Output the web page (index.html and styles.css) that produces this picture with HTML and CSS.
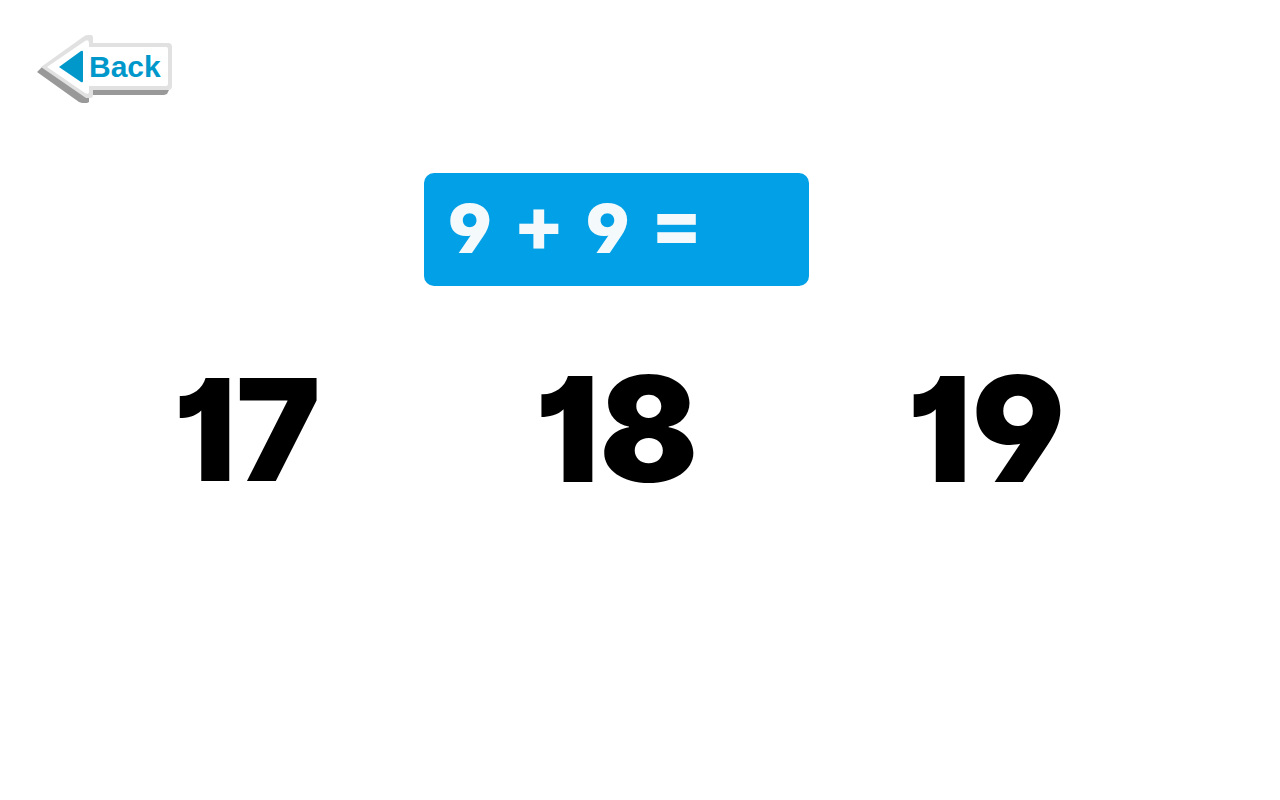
FILE: index.html
```html
<!DOCTYPE html>
<html lang="en">
<head>
  <meta charset="UTF-8">
  <title>9 + 9</title>
  <link rel="stylesheet" href="styles.css">
</head>
<body>
  <header class="top">
    <a class="back" href="#">
      <svg width="135" height="69" viewBox="0 0 135 69">
        <!-- shadow -->
        <path d="M0 37 L5 32 H56 V55 H132 L130 59 L127 60 H52 V67 L50 68 H45 L42 67 Z" fill="#999"/>
        <!-- arrow -->
        <path d="M4 32 L46 2 Q48 0 51 0 H54 Q56 0 56 3 V8 H131 Q135 8 135 12 V51 Q135 55 131 55 H56 V60 Q56 63 53 63 H49 Z" fill="#e1e1e1"/>
        <path d="M10 32 L48 6 Q52 4 52 8 V12 H129 Q131 12 131 14 V49 Q131 51 129 51 H52 V57 Q52 60 48 58 Z" fill="#fff"/>
        <path d="M22 32 L44 16 Q46 15 46 17 V46 Q46 48 44 47 Z" fill="#0098cb"/>
        <text class="back-text" x="52" y="42">Back</text>
      </svg>
    </a>
  </header>

  <main class="game">
    <div class="question">
      <span>9</span>
      <span class="sign">+</span>
      <span>9</span>
      <span class="sign">=</span>
    </div>

    <div class="answers">
      <button class="answer small">17</button>
      <button class="answer">18</button>
      <button class="answer">19</button>
    </div>
  </main>
</body>
</html>
```
FILE: styles.css
```css
body {
  margin: 0;
  background-color: #fff;
  font-family: Inter, sans-serif;
  color: #000;
}

.top {
  padding: 35px 37px 0;
}

.back {
  display: block;
  width: fit-content;
}

.back svg {
  display: block;
}

.back-text {
  font-family: "Liberation Sans", Arial, sans-serif;
  font-size: 30px;
  font-weight: bold;
  fill: #0098cb;
}

.game {
  padding: 69px 109px 0 62px;
}

.question {
  display: flex;
  align-items: center;
  gap: 21px;
  box-sizing: border-box;
  max-width: 385px;
  height: 113px;
  margin: 0 auto;
  padding: 0 24px 4px;
  background-color: #02a0e6;
  border-radius: 10px;
  color: #f4f9fb;
  font-size: 68px;
  font-weight: 900;
  font-feature-settings: "cv04";
  line-height: 80px;
}

.sign {
  font-size: 76px;
  font-weight: 800;
  font-feature-settings: "case";
}

.answers {
  display: grid;
  grid-template-columns: repeat(3, 1fr);
  align-items: center;
  margin-top: 55px;
}

.answer {
  padding: 0;
  border: none;
  background: none;
  color: inherit;
  font-family: inherit;
  font-size: 146px;
  font-weight: 900;
  font-feature-settings: "cv01", "cv04";
  line-height: 176px;
  cursor: pointer;
}

.small {
  font-size: 142px;
}
```
